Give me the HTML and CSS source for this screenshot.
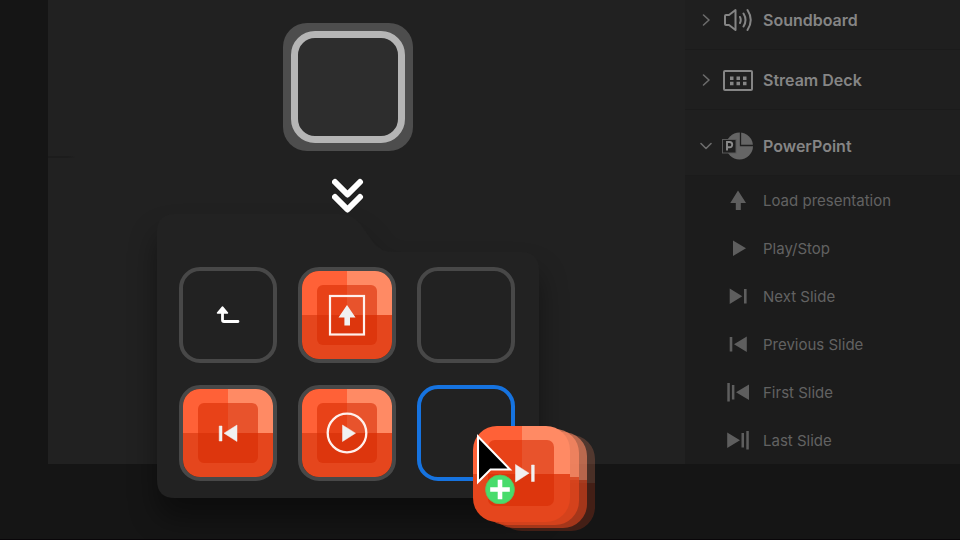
FILE: index.html
```html
<!DOCTYPE html>
<html lang="en">
<head>
    <meta charset="UTF-8">
    <meta name="viewport" content="width=device-width, initial-scale=1.0">
    <title>Stream Deck</title>
    <link rel="stylesheet" href="styles.css">
</head>
<body>
    <div class="window">
        <main class="canvas">
            <button type="button" class="folder-key" aria-label="Folder key"></button>
            <svg class="chevrons" width="32" height="36" viewBox="0 0 32 36" fill="none" stroke="#fff" stroke-width="6" stroke-linecap="round" stroke-linejoin="round">
                <path d="M3 4L15.500 16.500L28 4M3 19L15.500 31.500L28 19"/>
            </svg>

            <section class="folder">
                <svg class="folder-shape" width="382" height="284" viewBox="0 0 382 284">
                    <path fill="#222" d="M0 18Q0 0 18 0H182Q196 0 204 11L216 28Q223 38 238 38H364Q382 38 382 56V266Q382 284 364 284H18Q0 284 0 266Z"/>
                </svg>

                <div class="keys">
                    <button type="button" class="key" aria-label="Back">
                        <svg width="90" height="88" viewBox="0 0 90 88">
                            <path d="M39.500 42V49Q39.500 50.500 41 50.500H55" fill="none" stroke="#fff" stroke-width="2.800" stroke-linecap="round"/>
                            <path d="M39.500 36L44.500 42H34.500Z" fill="#fff" stroke="#fff" stroke-width="1.500" stroke-linejoin="round"/>
                        </svg>
                    </button>
                    <button type="button" class="key" aria-label="Load presentation">
                        <svg class="tile" width="90" height="88" viewBox="0 0 90 88">
                            <rect class="plate" x="15" y="14" width="60" height="60" rx="6"/>
                            <rect x="28" y="25" width="34" height="38.500" fill="none" stroke="#fff0ec" stroke-width="2.200"/>
                            <path d="M45 34L53.500 46.500H48V54.500H42.400V46.500H36.500Z" fill="#f1f1f1"/>
                        </svg>
                    </button>
                    <button type="button" class="key" aria-label="Empty key"></button>
                    <button type="button" class="key" aria-label="Previous Slide">
                        <svg class="tile" width="90" height="88" viewBox="0 0 90 88">
                            <rect class="plate" x="15" y="14" width="60" height="60" rx="6"/>
                            <path d="M36.200 37H39V52H36.200ZM54 36V52.500L41 44.200Z" fill="#f1f1f1" stroke="#f1f1f1" stroke-width=".5" stroke-linejoin="round"/>
                        </svg>
                    </button>
                    <button type="button" class="key" aria-label="Play/Stop">
                        <svg class="tile" width="90" height="88" viewBox="0 0 90 88">
                            <rect class="plate" x="15" y="14" width="60" height="60" rx="6"/>
                            <circle cx="45" cy="44" r="19.300" fill="none" stroke="#fff0ec" stroke-width="2.300"/>
                            <path d="M40.500 36V52.500L53.500 44.200Z" fill="#f1f1f1" stroke="#f1f1f1" stroke-width=".5" stroke-linejoin="round"/>
                        </svg>
                    </button>
                    <button type="button" class="key key-target" aria-label="Drop target"></button>
                </div>

                <!-- action being dragged, with its motion trail -->
                <div class="drag">
                    <span class="card trail-3"></span>
                    <span class="card trail-2"></span>
                    <span class="card trail-1"></span>
                    <span class="card">
                        <svg width="96" height="96" viewBox="0 0 96 96">
                            <rect class="plate" x="15" y="14" width="66" height="66" rx="7"/>
                            <path d="M42.500 38.500V56L56 47.200ZM58.500 39H61.300V55.500H58.500Z" fill="#f1f1f1" stroke="#f1f1f1" stroke-width=".5" stroke-linejoin="round"/>
                        </svg>
                    </span>
                    <svg class="pointer" width="44" height="72" viewBox="0 0 44 72">
                        <path d="M3 4.500V50L15.500 37.500H35Z" fill="#000" stroke="#fff" stroke-width="2"/>
                        <circle cx="25" cy="57.500" r="14.500" fill="#48dc6c" stroke="#67b85c" stroke-width=".8"/>
                        <path d="M25 47.700V67.300M15.200 57.500H34.800" stroke="#fff" stroke-width="4.600"/>
                    </svg>
                </div>
            </section>
        </main>

        <aside class="sidebar">
            <button type="button" class="group group-first">
                <svg class="arrow" width="12" height="14" viewBox="0 0 12 14"><path d="M3.500 2L9 7L3.500 12"/></svg>
                <svg width="32" height="28" viewBox="0 0 32 28" fill="none" stroke="#858585" stroke-width="2" stroke-linejoin="round" stroke-linecap="round">
                    <path d="M3 10Q3 9 4 9H7L13.500 4V24L7 19H4Q3 19 3 18ZM18 11Q19.500 14 18 17M21.500 7.500Q25.500 14 21.500 20.500M25.500 4Q32 14 25.500 24"/>
                </svg>
                <span>Soundboard</span>
            </button>
            <button type="button" class="group">
                <svg class="arrow" width="12" height="14" viewBox="0 0 12 14"><path d="M3.500 2L9 7L3.500 12"/></svg>
                <svg width="32" height="28" viewBox="0 0 32 28">
                    <rect x="2" y="5" width="28" height="19" rx="1" fill="none" stroke="#858585" stroke-width="2"/>
                    <path d="M8 10.500h3.500v3.500H8zM14.500 10.500h3.500v3.500h-3.500zM21 10.500h3.500v3.500H21zM8 15.700h3.500v3.500H8zM14.500 15.700h3.500v3.500h-3.500zM21 15.700h3.500v3.500H21z" fill="#858585"/>
                </svg>
                <span>Stream Deck</span>
            </button>
            <button type="button" class="group group-open">
                <svg class="arrow" width="12" height="14" viewBox="0 0 12 14"><path d="M1 4.500L6 9.500L11 4.500"/></svg>
                <svg width="32" height="28" viewBox="0 0 32 28">
                    <circle cx="17.500" cy="14" r="13.500" fill="#656565"/>
                    <path d="M18.500 0V13.500H32" fill="none" stroke="#1f1f1f" stroke-width="1.300"/>
                    <rect x=".5" y="7.500" width="13.500" height="13.500" fill="#1f1f1f" stroke="#595959"/>
                    <path d="M5 18.500V10H7.600Q10.200 10 10.200 12.600T7.600 15.200H5" fill="none" stroke="#8b8b8b" stroke-width="1.900"/>
                </svg>
                <span>PowerPoint</span>
            </button>

            <ul class="actions">
                <li><button type="button" class="action">
                    <svg width="24" height="24" viewBox="0 0 24 24"><path d="M12 2.500L20 15H14.800V22H9.800V15H4.300Z"/></svg>
                    <span>Load presentation</span>
                </button></li>
                <li><button type="button" class="action">
                    <svg width="24" height="24" viewBox="0 0 24 24"><path d="M7 4.500V20L20 12.200Z"/></svg>
                    <span>Play/Stop</span>
                </button></li>
                <li><button type="button" class="action">
                    <svg width="24" height="24" viewBox="0 0 24 24"><path d="M3.700 4.500V20L16.300 12.200ZM18 5h2.600v14.500H18z"/></svg>
                    <span>Next Slide</span>
                </button></li>
                <li><button type="button" class="action">
                    <svg width="24" height="24" viewBox="0 0 24 24"><path d="M20.800 4.500V20L8 12.200ZM3.700 5h2.600v14.500H3.700z"/></svg>
                    <span>Previous Slide</span>
                </button></li>
                <li><button type="button" class="action">
                    <svg width="24" height="24" viewBox="0 0 24 24"><path d="M23 4.500V20L10 12.200ZM1.300 3h2.500v18.500H1.300zM5.900 5h2.500v14.500H5.900z"/></svg>
                    <span>First Slide</span>
                </button></li>
                <li><button type="button" class="action">
                    <svg width="24" height="24" viewBox="0 0 24 24"><path d="M1.200 4.500V20L14 12.200ZM15.500 5h2.500v14.500h-2.500zM20.300 3h2.500v18.500h-2.500z"/></svg>
                    <span>Last Slide</span>
                </button></li>
            </ul>
        </aside>
    </div>
</body>
</html>
```

FILE: styles.css
```css
*,
*::before {
    box-sizing: border-box;
}
body {
    margin: 0;
    padding: 0 0 75px 48px;
    min-height: 100vh;
    display: flex;
    background-color: #151515;
    border-bottom: 1px solid #090609;
    font-family: Inter, "Liberation Sans", sans-serif;
    overflow: hidden;
}
button {
    margin: 0;
    padding: 0;
    border: none;
    background: none;
    font-family: inherit;
    cursor: pointer;
}
svg {
    display: block;
    flex-shrink: 0;
}

.window {
    flex: 1;
    display: flex;
    height: calc(100vh - 76px);
    background-color: #212121;
}
.canvas {
    flex: 1;
    display: flex;
    flex-direction: column;
    align-items: center;
    padding: 23px 37px 0 0;
    position: relative;
}
.canvas::before {
    content: "";
    position: absolute;
    left: 0;
    top: 156px;
    width: 28px;
    height: 2px;
    background: linear-gradient(to right, #1c1c1c 70%, #212121);
}

.folder-key {
    flex-shrink: 0;
    width: 130px;
    height: 128px;
    padding: 8px;
    border-radius: 24px;
    background-color: #4d4d4d;
}
.folder-key::before {
    content: "";
    display: block;
    height: 100%;
    border: 7px solid #b5b5b5;
    border-radius: 24px;
    background-color: #2d2d2d;
}
.chevrons {
    margin-top: 27px;
}

/* opened folder, hangs over the bottom edge of the window */
.folder {
    flex-shrink: 0;
    position: relative;
    padding: 53px 24px 17px 22px;
}
.folder-shape {
    position: absolute;
    left: 0;
    top: 0;
    filter: drop-shadow(0 20px 14px rgba(0, 0, 0, 0.4));
    overflow: visible;
}
.keys {
    position: relative;
    display: grid;
    grid-template-columns: repeat(3, 98px);
    gap: 22px 21px;
}
.key {
    height: 96px;
    border: 4px solid #484848;
    border-radius: 21px;
}
.key-target {
    border-color: #1673e0;
}
.tile,
.card {
    border-radius: 17px;
    background:
        linear-gradient(#e5461d, #e5461d) 0 100% / 100% 50% no-repeat,
        linear-gradient(to right, #ff6137 50%, #ff8a64 50%);
}
.plate {
    fill: rgba(215, 42, 2, 0.57);
}

.drag {
    position: absolute;
    left: 316px;
    top: 212px;
}
.card {
    position: absolute;
    left: 0;
    top: 0;
    width: 97px;
    height: 96px;
    border-radius: 24px;
}
.trail-1 {
    left: 9px;
    top: 3px;
    opacity: 0.75;
}
.trail-2 {
    left: 17px;
    top: 6px;
    opacity: 0.6;
}
.trail-3 {
    left: 25px;
    top: 9px;
    opacity: 0.22;
}
.pointer {
    position: absolute;
    left: 2px;
    top: 6px;
}

/* action list */
.sidebar {
    width: 275px;
    background-color: #1f1f1f;
}
.group {
    width: 100%;
    height: 60px;
    display: flex;
    align-items: center;
    padding-left: 15px;
    border-bottom: 1px solid #1b1b1b;
    color: #858585;
    font-size: 16px;
    font-weight: 600;
}
.group svg + svg {
    margin: 0 9px 0 10px;
}
.group-first {
    height: 50px;
    padding-bottom: 10px;
}
.group-open {
    height: 66px;
    padding-top: 6px;
}
.arrow {
    fill: none;
    stroke: #6c6c6c;
    stroke-width: 1.6;
    stroke-linecap: round;
    stroke-linejoin: round;
}
.actions {
    margin: 0;
    padding: 0;
    list-style: none;
    background-color: #1c1c1c;
}
.action {
    width: 100%;
    height: 48px;
    display: flex;
    align-items: center;
    gap: 13px;
    padding-left: 41px;
    color: #626262;
    font-size: 15px;
}
.action svg {
    fill: #5e5e5e;
}
```
